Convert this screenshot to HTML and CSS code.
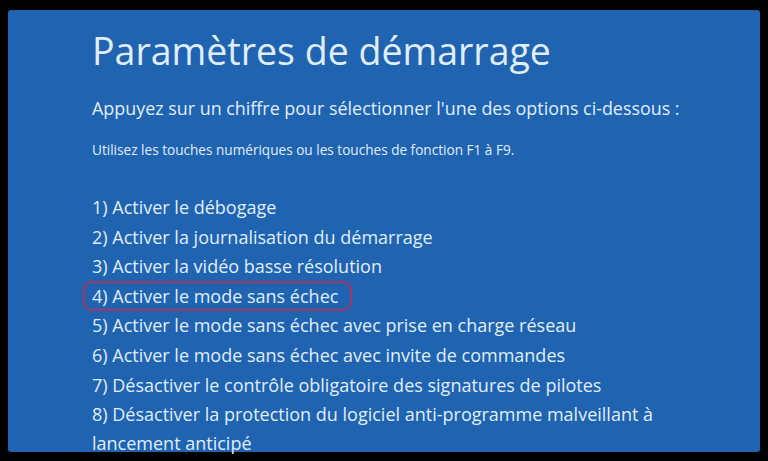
FILE: index.html
```html
<!DOCTYPE html>
<html lang="fr">
<head>
<meta charset="utf-8">
<link rel="stylesheet" href="styles.css">
</head>
<body>
<div class="screen">
  <h1 class="title">Paramètres de démarrage</h1>
  <p class="lead">Appuyez sur un chiffre pour sélectionner l'une des options ci-dessous :</p>
  <p class="hint">Utilisez les touches numériques ou les touches de fonction F1 à F9.</p>
  <ol class="options">
    <li>1) Activer le débogage</li>
    <li>2) Activer la journalisation du démarrage</li>
    <li>3) Activer la vidéo basse résolution</li>
    <li><span class="ring">4) Activer le mode sans échec</span></li>
    <li>5) Activer le mode sans échec avec prise en charge réseau</li>
    <li>6) Activer le mode sans échec avec invite de commandes</li>
    <li>7) Désactiver le contrôle obligatoire des signatures de pilotes</li>
    <li class="last">8) Désactiver la protection du logiciel anti-programme malveillant à lancement anticipé</li>
  </ol>
</div>
</body>
</html>
```
FILE: styles.css
```css
html, body {
  margin: 0;
  padding: 0;
  background: #000;
}
body {
  width: 768px;
  height: 461px;
  overflow: hidden;
}
.screen {
  margin: 10px 8px 0 8px;
  width: 752px;
  height: 442px;
  background: #1f63b1;
  border-radius: 3px;
  box-sizing: border-box;
  padding: 19px 48px 0 84px;
  color: #e0eefa;
  font-family: "Open Sans", "Noto Sans", sans-serif;
}
.title {
  margin: 0;
  font-weight: 400;
  font-size: 37.5px;
  line-height: 44px;
}
.lead {
  margin: 22px 0 0 0;
  font-size: 17.9px;
  line-height: 26px;
}
.hint {
  margin: 20px 0 0 0;
  font-size: 13.6px;
  line-height: 18px;
}
.options {
  list-style: none;
  margin: 34px 0 0 0;
  padding: 0;
  font-size: 18px;
  line-height: 29.6px;
}
.options li {
  margin: 0;
}
.options .last {
  line-height: 28.6px;
}
.ring {
  display: inline-block;
  position: relative;
}
.ring::before {
  content: "";
  position: absolute;
  left: -9px;
  right: -14px;
  top: -1px;
  bottom: 0;
  border: 2px solid #a03862;
  border-radius: 9px;
}
```
